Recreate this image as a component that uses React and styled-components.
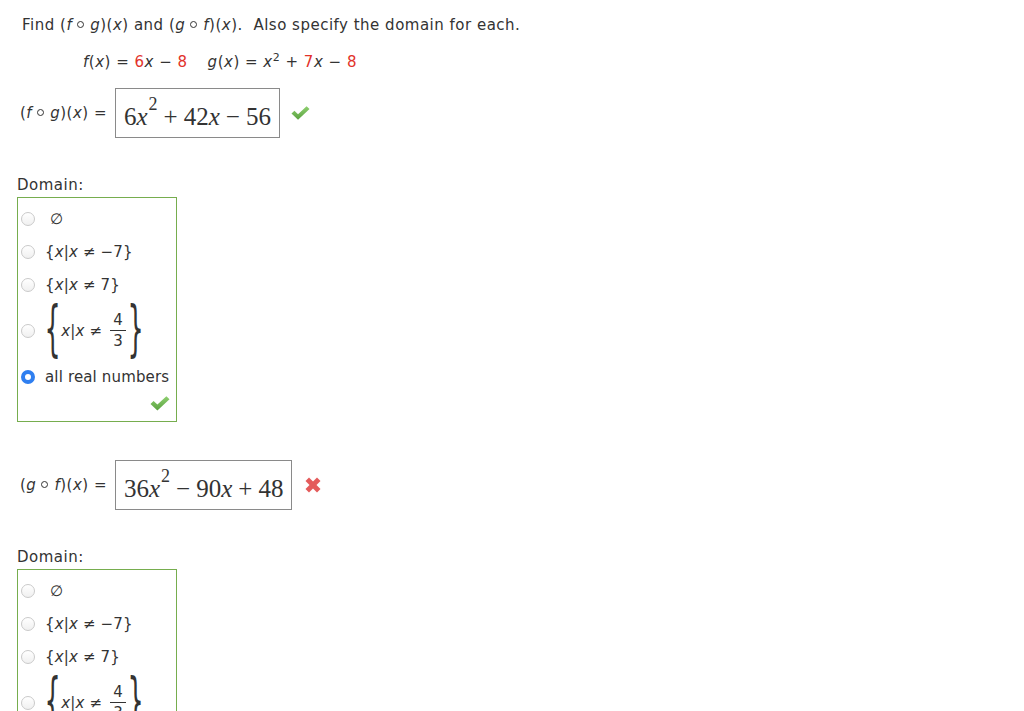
import React from "react";
import styled, { createGlobalStyle } from "styled-components";

const Global = createGlobalStyle`
  html, body { margin: 0; padding: 0; overflow: hidden; background: #fff; }
  body { font-family: "DejaVu Sans", Verdana, sans-serif; color: #333; }
`;

const Page = styled.div`
  padding: 16px 0 0 17px;
  font-size: 15px;
  letter-spacing: 0.5px;
`;

const Title = styled.div`
  margin-left: 5px;
  line-height: 18px;
  white-space: pre;
`;

const Defs = styled.div`
  margin: 19px 0 0 66px;
  line-height: 18px;
  display: flex;
  gap: 20px;
  white-space: pre;
`;

const I = styled.i`
  font-style: italic;
`;

const Red = styled.span`
  color: #e2322a;
`;

const Sup = styled.sup`
  font-size: 11px;
  vertical-align: 6px;
  line-height: 0;
`;

const Ring = styled.span`
  display: inline-block;
  box-sizing: border-box;
  width: 7px;
  height: 7px;
  border: 1.6px solid #333;
  border-radius: 50%;
  margin: 0 6px 0 5px;
  vertical-align: 2px;
`;

const Part = styled.section`
  margin-top: ${(p) => p.$top}px;
`;

const EqRow = styled.div`
  display: flex;
  align-items: center;
  height: 50px;
`;

const EqLabel = styled.span`
  margin-left: 3px;
  margin-right: 8px;
  white-space: pre;
`;

const MathBox = styled.div`
  box-sizing: border-box;
  height: 50px;
  display: flex;
  align-items: center;
  padding: 7px 8px 0 8px;
  border: 1px solid #8a8a8a;
  font-family: "Liberation Serif", "Times New Roman", serif;
  font-size: 25px;
  letter-spacing: 0;
  color: #333;
  white-space: nowrap;
`;

const MI = styled.span`
  font-style: italic;
`;

const MSup = styled.span`
  font-size: 18px;
  position: relative;
  top: -12px;
  margin-left: 1px;
`;

const Op = styled.span`
  margin: 0 6px;
`;

const Mark = styled.span`
  display: inline-flex;
  margin-left: ${(p) => p.$l}px;
`;

const DomainLabel = styled.div`
  margin-top: 38px;
  line-height: 18px;
`;

const Options = styled.div`
  box-sizing: border-box;
  margin-top: 3px;
  width: 160px;
  border: 1px solid #76ad4e;
  padding-top: 4px;
  letter-spacing: 0.15px;
`;

const Option = styled.label`
  display: flex;
  align-items: center;
  height: ${(p) => (p.$tall ? 59 : 33)}px;
  white-space: nowrap;
`;

const Radio = styled.span`
  box-sizing: border-box;
  flex: none;
  width: 14px;
  height: 14px;
  border-radius: 50%;
  margin: 0 10px 0 3px;
  background: ${(p) => (p.$on ? "#fff" : "linear-gradient(#fff, #f0f0f0)")};
  border: ${(p) => (p.$on ? "4px solid #2f7ff0" : "1px solid #cacaca")};
`;

const OptText = styled.span`
  display: inline-flex;
  align-items: center;
  padding-left: ${(p) => p.$pl || 0}px;
`;

const BigBrace = styled.span`
  font-size: 30px;
  display: inline-block;
  transform: scale(0.85, 2);
  line-height: 1;
  margin: ${(p) => (p.$right ? "0 0 0 0" : "0 -1px 0 -2px")};
  position: relative;
  top: -2px;
  font-family: "DejaVu Sans", sans-serif;
  font-weight: normal;
`;

const Frac = styled.span`
  display: inline-flex;
  flex-direction: column;
  align-items: center;
  margin-left: 8px;
  line-height: 20px;
`;

const FracTop = styled.span`
  border-bottom: 1px solid #333;
  padding: 0 3px;
`;

const CheckRow = styled.div`
  display: flex;
  justify-content: flex-end;
  height: 28px;
  padding-right: 6px;
  padding-top: 3px;
  box-sizing: border-box;
`;

const Check = ({ size = 20, id }) => (
  <svg width={size} height={size * 0.75} viewBox="0 0 20 15">
    <defs>
      <linearGradient id={id} x1="0" y1="0" x2="0" y2="1">
        <stop offset="0" stopColor="#8fd070" />
        <stop offset="1" stopColor="#5aa140" />
      </linearGradient>
    </defs>
    <path
      d="M0.5 8 L3.6 5 L7.4 8.6 L16.4 0.2 L19.5 3.2 L7.4 14.6 Z"
      fill={`url(#${id})`}
    />
  </svg>
);

const Cross = () => (
  <svg width="18" height="18" viewBox="0 0 18 18">
    <path
      d="M1.5 5 L5 1.5 L9 5.5 L13 1.5 L16.5 5 L12.5 9 L16.5 13 L13 16.5 L9 12.5 L5 16.5 L1.5 13 L5.5 9 Z"
      fill="#e45b5b"
    />
  </svg>
);

const Comp = ({ a, b }) => (
  <>
    (<I>{a}</I>
    <Ring />
    <I>{b}</I>)(<I>x</I>)
  </>
);

const DomainOptions = ({ selected, showCheck, uid }) => (
  <Options>
    <Option>
      <Radio />
      <OptText $pl={5}>∅</OptText>
    </Option>
    <Option>
      <Radio />
      <OptText>
        {"{"}
        <I>x</I>|<I>x</I>&nbsp;≠ −7{"}"}
      </OptText>
    </Option>
    <Option>
      <Radio />
      <OptText>
        {"{"}
        <I>x</I>|<I>x</I>&nbsp;≠ 7{"}"}
      </OptText>
    </Option>
    <Option $tall>
      <Radio />
      <OptText>
        <BigBrace>{"{"}</BigBrace>
        <I>x</I>|<I>x</I>&nbsp;≠
        <Frac>
          <FracTop>4</FracTop>
          <span>3</span>
        </Frac>
        <BigBrace $right>{"}"}</BigBrace>
      </OptText>
    </Option>
    <Option>
      <Radio $on={selected} />
      <OptText>all real numbers</OptText>
    </Option>
    <CheckRow>{showCheck && <Check size={20} id={uid} />}</CheckRow>
  </Options>
);

export default function App() {
  return (
    <Page>
      <Global />
      <Title>
        Find <Comp a="f" b="g" /> and <Comp a="g" b="f" />.{"  "}Also specify the
        domain for each.
      </Title>
      <Defs>
        <span>
          <I>f</I>(<I>x</I>) = <Red>6</Red>
          <I>x</I> − <Red>8</Red>
        </span>
        <span>
          <I>g</I>(<I>x</I>) = <I>x</I>
          <Sup>2</Sup> + <Red>7</Red>
          <I>x</I> − <Red>8</Red>
        </span>
      </Defs>

      <Part $top={17}>
        <EqRow>
          <EqLabel>
            <Comp a="f" b="g" /> =
          </EqLabel>
          <MathBox>
            6<MI>x</MI>
            <MSup>2</MSup>
            <Op>+</Op>42<MI>x</MI>
            <Op>−</Op>56
          </MathBox>
          <Mark $l={11}>
            <Check size={19} id="c1" />
          </Mark>
        </EqRow>
        <DomainLabel>Domain:</DomainLabel>
        <DomainOptions selected showCheck uid="c2" />
      </Part>

      <Part $top={38}>
        <EqRow>
          <EqLabel>
            <Comp a="g" b="f" /> =
          </EqLabel>
          <MathBox>
            36<MI>x</MI>
            <MSup>2</MSup>
            <Op>−</Op>90<MI>x</MI>
            <Op>+</Op>48
          </MathBox>
          <Mark $l={12}>
            <Cross />
          </Mark>
        </EqRow>
        <DomainLabel>Domain:</DomainLabel>
        <DomainOptions selected={false} showCheck={false} uid="c3" />
      </Part>
    </Page>
  );
}
